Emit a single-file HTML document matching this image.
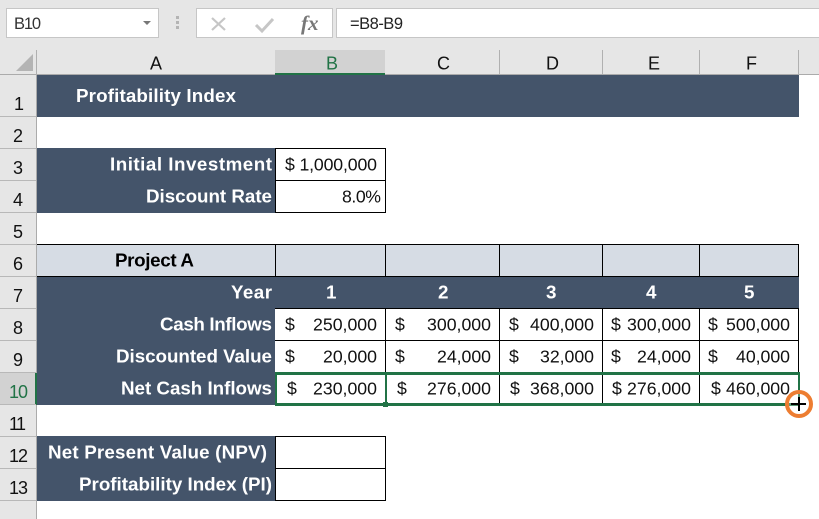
<!DOCTYPE html>
<html><head><meta charset="utf-8"><style>
html,body{margin:0;padding:0;background:#fff;overflow:hidden}
svg{display:block}
text{font-family:"Liberation Sans",sans-serif;font-size:17.7px}
.b{font-weight:bold;fill:#fff;font-size:18.8px}
.k{font-weight:bold;fill:#000;font-size:18.8px}
.n{fill:#111}
.h{fill:#111;font-size:18px}
</style></head><body>
<svg width="819" height="519" viewBox="0 0 819 519" xmlns="http://www.w3.org/2000/svg" shape-rendering="crispEdges">
<rect width="819" height="519" fill="#fff"/>
<!-- top chrome -->
<rect width="819" height="75" fill="#e6e6e6"/>
<rect x="6.5" y="8.5" width="152" height="29" fill="#fff" stroke="#c6c6c6"/>
<rect x="196.5" y="8.5" width="136" height="29" fill="#fff" stroke="#c6c6c6"/>
<rect x="336.5" y="8.5" width="483" height="29" fill="#fff" stroke="#c6c6c6"/>
<text x="14" y="29" style="font-size:16.5px" textLength="27" fill="#333">B10</text>
<polygon points="143,21 151,21 147,25" fill="#777" shape-rendering="auto"/>
<rect x="176" y="16" width="3" height="3" fill="#b4b4b4"/><rect x="176" y="21" width="3" height="3" fill="#b4b4b4"/><rect x="176" y="26" width="3" height="3" fill="#b4b4b4"/>
<path d="M212 18L225 30M225 18L212 30" stroke="#c6c6c6" stroke-width="2.2" fill="none" shape-rendering="auto"/>
<path d="M256 25L262 31L273 19" stroke="#c6c6c6" stroke-width="3" fill="none" shape-rendering="auto"/>
<text x="301" y="30" style="font-family:'Liberation Serif',serif;font-style:italic;font-weight:bold;font-size:21px" fill="#777">fx</text>
<text x="350" y="29" style="font-size:16.5px" textLength="53" fill="#222">=B8-B9</text>
<!-- col header -->
<rect x="275" y="50" width="110" height="24" fill="#d2d2d2"/>
<rect x="275" y="73" width="110" height="2" fill="#217346"/>
<rect x="0" y="74" width="275" height="1" fill="#ababab"/><rect x="385" y="74" width="434" height="1" fill="#ababab"/>
<polygon points="33,54 33,71 16,71" fill="#b4b4b4" shape-rendering="auto"/>
<g fill="#b0b0b0"><rect x="36" y="50" width="1" height="25"/><rect x="499" y="50" width="1" height="24"/><rect x="602" y="50" width="1" height="24"/><rect x="699" y="50" width="1" height="24"/><rect x="798" y="50" width="1" height="24"/></g>
<text x="150" y="69.5" class="h" textLength="12">A</text>
<text x="326" y="69.5" style="font-size:18px" fill="#217346" textLength="10">B</text>
<text x="437" y="69.5" class="h" textLength="11">C</text>
<text x="546" y="69.5" class="h" textLength="12">D</text>
<text x="648" y="69.5" class="h" textLength="9">E</text>
<text x="746" y="69.5" class="h" textLength="9">F</text>
<!-- row header -->
<rect x="0" y="75" width="36" height="444" fill="#e6e6e6"/>
<rect x="36" y="75" width="1" height="444" fill="#ababab"/>
<rect x="0" y="373" width="36" height="32" fill="#d2d2d2"/>
<rect x="35" y="373" width="2" height="32" fill="#217346"/>
<g fill="#b8b8b8">
<rect x="0" y="116" width="36" height="1"/><rect x="0" y="148" width="36" height="1"/><rect x="0" y="180" width="36" height="1"/><rect x="0" y="212" width="36" height="1"/><rect x="0" y="244" width="36" height="1"/><rect x="0" y="276" width="36" height="1"/><rect x="0" y="308" width="36" height="1"/><rect x="0" y="340" width="36" height="1"/><rect x="0" y="372" width="36" height="1"/><rect x="0" y="404" width="36" height="1"/><rect x="0" y="436" width="36" height="1"/><rect x="0" y="468" width="36" height="1"/><rect x="0" y="500" width="36" height="1"/>
</g>
<g>
<text x="14" y="110" class="h">1</text>
<text x="13" y="142" class="h">2</text>
<text x="13" y="174" class="h">3</text>
<text x="13" y="206" class="h">4</text>
<text x="13" y="238" class="h">5</text>
<text x="13" y="270" class="h">6</text>
<text x="13" y="302" class="h">7</text>
<text x="13" y="334" class="h">8</text>
<text x="13" y="366" class="h">9</text>
<text x="9" y="398" style="font-size:18px" fill="#217346" textLength="19">10</text>
<text x="9" y="430" class="h" textLength="17">11</text>
<text x="9" y="462" class="h" textLength="19">12</text>
<text x="9" y="494" class="h" textLength="19">13</text>
</g>
<!-- fills -->
<g fill="#44546a">
<rect x="37" y="75" width="762" height="42"/>
<rect x="37" y="148" width="238" height="65"/>
<rect x="37" y="277" width="762" height="32"/>
<rect x="37" y="309" width="238" height="96"/>
<rect x="37" y="436" width="238" height="65"/>
</g>
<rect x="37" y="245" width="762" height="32" fill="#d6dce4"/>
<!-- grid -->
<g fill="none" stroke="#000" stroke-width="1">
<path d="M275.5 148.5H385.5V212.5H275.5ZM275.5 180.5H385.5"/>
<path d="M37 244.5H799M37 276.5H799M275.5 244.5V276.5M385.5 244.5V276.5M499.5 244.5V276.5M602.5 244.5V276.5M699.5 244.5V276.5M798.5 244.5V276.5"/>
<path d="M275 308.5H799M275 340.5H799M385.5 308.5V372M499.5 308.5V404M602.5 308.5V404M699.5 308.5V404M798.5 308.5V372"/>
<path d="M275.5 436.5H385.5V500.5H275.5ZM275.5 468.5H385.5"/>
</g>
<!-- selection -->
<g fill="#217346">
<rect x="275" y="372" width="525" height="3"/>
<rect x="275" y="403" width="525" height="3"/>
<rect x="275" y="372" width="2" height="34"/>
<rect x="385" y="372" width="2" height="34"/>
<rect x="798" y="372" width="2" height="34"/>
<rect x="383" y="402" width="5" height="5"/>
</g>
<!-- labels -->
<text x="76" y="102" class="b" textLength="160">Profitability Index</text>
<text x="110" y="170.5" class="b" textLength="162">Initial Investment</text>
<text x="146" y="202.5" class="b" textLength="126">Discount Rate</text>
<text x="115" y="266.5" class="k" textLength="79">Project A</text>
<text x="231" y="298.5" class="b" textLength="41">Year</text>
<text x="160" y="330.5" class="b" textLength="112">Cash Inflows</text>
<text x="116" y="362.5" class="b" textLength="156">Discounted Value</text>
<text x="121" y="394.5" class="b" textLength="151">Net Cash Inflows</text>
<text x="48" y="458.5" class="b" textLength="219">Net Present Value (NPV)</text>
<text x="79" y="490.5" class="b" textLength="193">Profitability Index (PI)</text>
<!-- year nums -->
<text x="326" y="298.5" class="b">1</text>
<text x="438" y="298.5" class="b">2</text>
<text x="546" y="298.5" class="b">3</text>
<text x="646" y="298.5" class="b">4</text>
<text x="744" y="298.5" class="b">5</text>
<!-- values -->
<text x="285" y="170.5" class="n" textLength="92">$ 1,000,000</text>
<text x="342" y="202.5" class="n" textLength="39">8.0%</text>

<text x="285" y="330.5" class="n">$</text><text x="313" y="330.5" class="n" textLength="64">250,000</text>
<text x="395" y="330.5" class="n">$</text><text x="427" y="330.5" class="n" textLength="64">300,000</text>
<text x="509" y="330.5" class="n">$</text><text x="530" y="330.5" class="n" textLength="64">400,000</text>
<text x="611" y="330.5" class="n">$</text><text x="627" y="330.5" class="n" textLength="64">300,000</text>
<text x="708" y="330.5" class="n">$</text><text x="726" y="330.5" class="n" textLength="64">500,000</text>

<text x="285" y="362.5" class="n">$</text><text x="323" y="362.5" class="n" textLength="54">20,000</text>
<text x="395" y="362.5" class="n">$</text><text x="437" y="362.5" class="n" textLength="54">24,000</text>
<text x="509" y="362.5" class="n">$</text><text x="540" y="362.5" class="n" textLength="54">32,000</text>
<text x="611" y="362.5" class="n">$</text><text x="637" y="362.5" class="n" textLength="54">24,000</text>
<text x="708" y="362.5" class="n">$</text><text x="736" y="362.5" class="n" textLength="54">40,000</text>

<text x="287" y="394.5" class="n">$</text><text x="313" y="394.5" class="n" textLength="64">230,000</text>
<text x="397" y="394.5" class="n">$</text><text x="427" y="394.5" class="n" textLength="64">276,000</text>
<text x="510" y="394.5" class="n">$</text><text x="530" y="394.5" class="n" textLength="64">368,000</text>
<text x="612" y="394.5" class="n">$</text><text x="627" y="394.5" class="n" textLength="64">276,000</text>
<text x="711" y="394.5" class="n">$</text><text x="726" y="394.5" class="n" textLength="64">460,000</text>
<!-- cursor circle -->
<circle cx="799" cy="404" r="12" fill="#fff" fill-opacity="0.25" stroke="#ed7d31" stroke-width="4" shape-rendering="auto"/>
<rect x="791" y="403" width="15" height="2" fill="#000"/>
<rect x="798" y="397" width="2" height="14" fill="#000"/>
</svg>
</body></html>
